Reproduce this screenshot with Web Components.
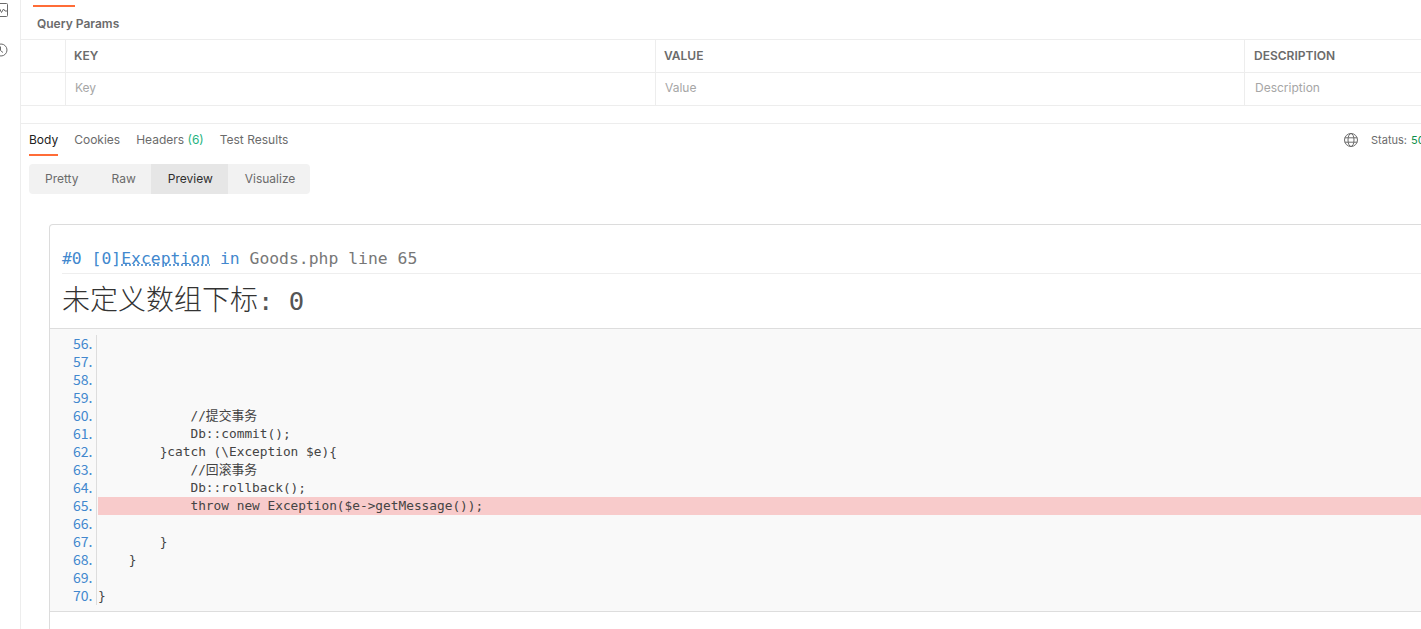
<!DOCTYPE html>
<html>
<head>
<meta charset="utf-8">
<style>
    html, body { margin: 0; height: 100%; overflow: hidden; background: #fff; }
    body { font-family: Inter, "Noto Sans CJK SC", sans-serif; }
</style>
</head>
<body>
<app-shell>
    <side-rail slot="rail"></side-rail>
    <params-table></params-table>
    <response-bar></response-bar>
    <format-tabs></format-tabs>
    <error-page title-file="Goods.php line 65" message="未定义数组下标" message-code=": 0"></error-page>
</app-shell>

<script>
    (function() {
        class AppShell extends HTMLElement {
            constructor() {
                super();
                const shadow = this.attachShadow({ mode: 'open' });
                shadow.innerHTML = `
    <style>
        :host { display: flex; width: 1421px; height: 629px; overflow: hidden; }
        .rail { flex: none; width: 20px; border-right: 1px solid #ededed; }
        .main { flex: none; width: 1500px; }
    </style>
    <div class="rail"><slot name="rail"></slot></div>
    <div class="main"><slot></slot></div>
                `;
            }
        }
        customElements.define("app-shell", AppShell);

        class SideRail extends HTMLElement {
            constructor() {
                super();
                const shadow = this.attachShadow({ mode: 'open' });
                shadow.innerHTML = `
    <style>
        :host { display: flex; flex-direction: column; align-items: flex-end; gap: 26px; padding-top: 3px; height: 100%; overflow: hidden; }
        svg { display: block; width: 14px; height: 14px; margin-right: 12px; }
    </style>
    <svg viewBox="0 0 14 14" fill="none" stroke="#6b6b6b" stroke-width="1">
        <rect x=".5" y=".5" width="13" height="13" rx="1"/>
        <path d="M.5 8H4l1.5-2.500L7.500 9.500 9.500 6l1.500 2H13.500"/>
    </svg>
    <svg viewBox="0 0 14 14" fill="none" stroke="#6b6b6b" stroke-width="1">
        <circle cx="7" cy="7" r="6"/>
        <path d="M6.500 3.500V7.500L9 9.500"/>
    </svg>
                `;
            }
        }
        customElements.define("side-rail", SideRail);

        class ParamsTable extends HTMLElement {
            constructor() {
                super();
                const shadow = this.attachShadow({ mode: 'open' });
                shadow.innerHTML = `
    <style>
        :host { display: block; border-bottom: 1px solid #ededed; box-sizing: border-box; height: 124px; font-size: 12px; color: #6b6b6b; }
        .tab { display: inline-block; margin-left: 12px; padding: 0 4px; height: 39px; box-sizing: border-box; position: relative; font-weight: 600; line-height: 47px; }
        .tab::before { content: ""; position: absolute; left: 0; width: 42px; top: 5px; height: 2px; background: #ff6c37; }
        .grid { display: grid; grid-template-columns: 44px 590px 589px 1fr; border-top: 1px solid #ededed; border-bottom: 1px solid #ededed; }
        .cell { height: 32px; line-height: 30px; padding-left: 8px; border-left: 1px solid #ededed; box-sizing: border-box; }
        .cell:nth-child(4n+1) { border-left: 0; }
        .head { height: 33px; line-height: 32px; border-bottom: 1px solid #ededed; font-weight: 600; }
        .ph { color: #a6a6a6; padding-left: 9px; }
        .cell:nth-child(4) { padding-left: 9px; }
        .cell:nth-child(8) { padding-left: 10px; }
    </style>
    <div class="tab">Query Params</div>
    <div class="grid">
        <div class="cell head"></div>
        <div class="cell head">KEY</div>
        <div class="cell head">VALUE</div>
        <div class="cell head">DESCRIPTION</div>
        <div class="cell"></div>
        <div class="cell ph">Key</div>
        <div class="cell ph">Value</div>
        <div class="cell ph">Description</div>
    </div>
                `;
            }
        }
        customElements.define("params-table", ParamsTable);

        class ResponseBar extends HTMLElement {
            constructor() {
                super();
                const shadow = this.attachShadow({ mode: 'open' });
                shadow.innerHTML = `
    <style>
        :host { display: flex; height: 32px; font-size: 12px; color: #6b6b6b; position: relative; }
        .tab { margin-left: 8px; margin-right: 8px; height: 32px; line-height: 32px; box-sizing: border-box; }
        .on { color: #212121; border-bottom: 2px solid #ff6c37; }
        .count { color: #26b47f; }
        .status { position: absolute; left: 1322px; top: 0; display: flex; align-items: center; height: 32px; font-size: 11px; white-space: nowrap; }
        .status svg { width: 16px; height: 16px; margin-right: 12px; }
        .code { color: #0f8f4c; margin-left: 4px; }
    </style>
    <div class="tab on">Body</div>
    <div class="tab">Cookies</div>
    <div class="tab">Headers <span class="count">(6)</span></div>
    <div class="tab">Test Results</div>
    <div class="status">
        <svg viewBox="0 0 16 16" fill="none" stroke="#6b6b6b" stroke-width="1">
            <circle cx="8" cy="8" r="6.500"/>
            <ellipse cx="8" cy="8" rx="3" ry="6.500"/>
            <path d="M1.800 5.800H14.200M1.800 10.200H14.200"/>
        </svg>
        <span>Status:</span><span class="code">500 Internal Server Error</span>
    </div>
                `;
            }
        }
        customElements.define("response-bar", ResponseBar);

        class FormatTabs extends HTMLElement {
            constructor() {
                super();
                const shadow = this.attachShadow({ mode: 'open' });
                shadow.innerHTML = `
    <style>
        :host { display: flex; width: max-content; height: 30px; margin: 8px 0 0 8px; background: #f2f2f2; border-radius: 4px; overflow: hidden; font-size: 12px; color: #6b6b6b; }
        div { line-height: 30px; padding: 0 15px 0 17px; }
        div:first-of-type { padding: 0 16px; }
        .on { background: #e6e6e6; color: #2e2e2e; }
    </style>
    <div>Pretty</div>
    <div>Raw</div>
    <div class="on">Preview</div>
    <div>Visualize</div>
                `;
            }
        }
        customElements.define("format-tabs", FormatTabs);

        const LINES = [
            [56, ""], [57, ""], [58, ""], [59, ""],
            [60, "            //提交事务"],
            [61, "            Db::commit();"],
            [62, "        }catch (\\Exception $e){"],
            [63, "            //回滚事务"],
            [64, "            Db::rollback();"],
            [65, "            throw new Exception($e->getMessage());", true],
            [66, ""],
            [67, "        }"],
            [68, "    }"],
            [69, ""],
            [70, "}"]
        ];

        class ErrorPage extends HTMLElement {
            constructor() {
                super();
                const shadow = this.attachShadow({ mode: 'open' });
                shadow.innerHTML = `
    <style>
        :host { display: block; height: 420px; margin: 30px 0 0 28px; border: 1px solid #dcdcdc; border-bottom: 0; border-radius: 4px 4px 0 0; color: #333; font-family: "DejaVu Sans Mono", "Noto Sans CJK SC", monospace; }
        .info { padding: 0 12px; height: 103px; box-sizing: border-box; padding-top: 20px; }
        h1 { margin: 0; font-size: 16.400px; font-weight: 400; line-height: 27px; color: #777; border-bottom: 1px solid #eee; height: 29px; box-sizing: border-box; }
        h1 span { color: #4288ce; }
        h1 abbr { color: #4288ce; text-decoration: underline dotted; }
        h2 { margin: 0; font-size: 28px; font-weight: 300; line-height: 48px; color: #333; font-family: "Noto Sans CJK SC", sans-serif; }
        h2 span { font-family: "DejaVu Sans Mono", monospace; font-size: 25.600px; font-weight: 400; color: #555; }
        .source { background: #f9f9f9; border-top: 1px solid #ddd; border-bottom: 1px solid #ddd; padding: 6px 0; font-size: 12.800px; color: #444; }
        .row { display: flex; height: 18px; line-height: 18px; }
        .no { flex: none; width: 47px; box-sizing: border-box; padding-right: 3.500px; text-align: right; color: #4288ce; border-right: 1px solid #ddd; margin-right: 1px; font-family: "Noto Sans CJK SC", sans-serif; font-size: 14px; line-height: 16px; }
        .code { flex: 1; white-space: pre; }
        .hl { background: #f8cbcb; }
    </style>
    <div class="info">
        <h1><span>#0 [0]<abbr>Exception</abbr> in</span> ${this.getAttribute("title-file")}</h1>
        <h2>${this.getAttribute("message")}<span>${this.getAttribute("message-code")}</span></h2>
    </div>
    <div class="source">
        ${LINES.map((l) => `<div class="row"><div class="no">${l[0]}.</div><div class="code${l[2] ? " hl" : ""}">${l[1]}</div></div>`).join("")}
    </div>
                `;
            }
        }
        customElements.define("error-page", ErrorPage);
    })()
</script>
</body>
</html>
